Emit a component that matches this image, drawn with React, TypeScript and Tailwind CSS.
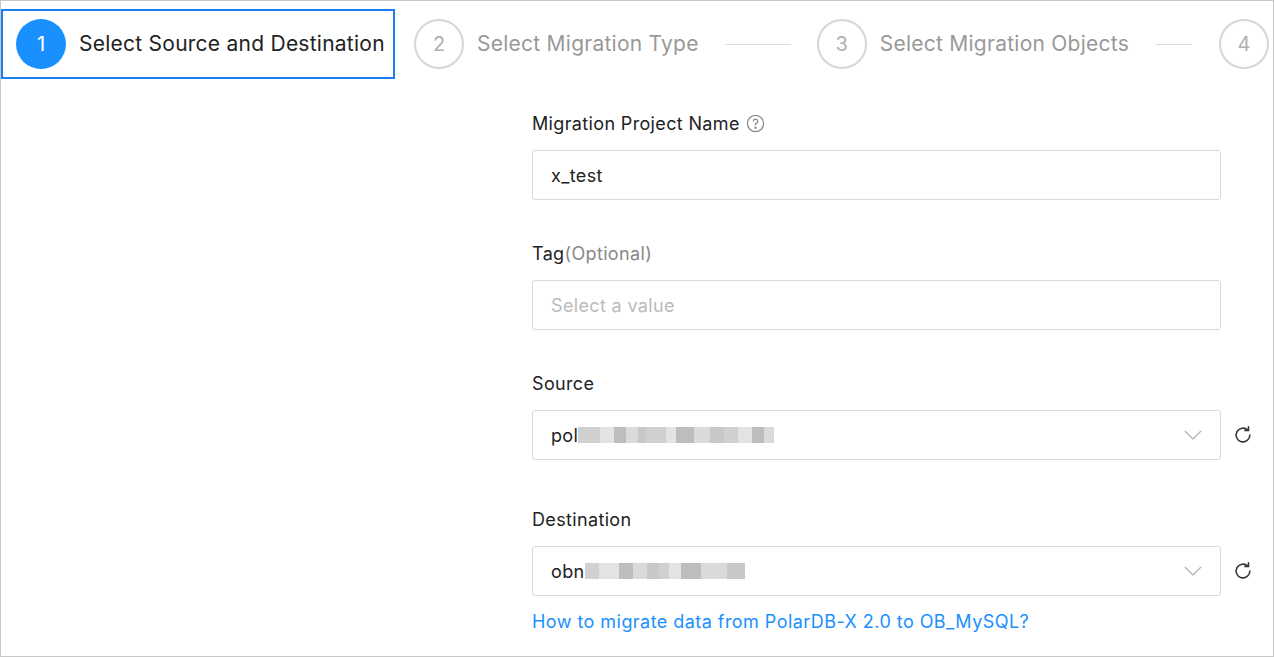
import React from "react";

const F = { fontFamily: "Inter, 'Liberation Sans', sans-serif" };

function Refresh() {
  return (
    <svg width="22" height="22" viewBox="0 0 24 24" fill="none" stroke="#333" strokeWidth="1.7" strokeLinecap="round">
      <path d="M19.5 12a7.5 7.5 0 1 1-2.3-5.4" />
      <path d="M18 3v4h-4" />
    </svg>
  );
}
function Chevron() {
  return (
    <svg width="18" height="12" viewBox="0 0 18 12" fill="none" stroke="#b5b5b5" strokeWidth="1.4">
      <path d="M1 2l8 8 8-8" />
    </svg>
  );
}
function Blur({ widths }: { widths: number[] }) {
  const shades = ["#d0d0d0", "#e3e3e3", "#bdbdbd", "#dadada", "#c8c8c8"];
  return (
    <div className="flex items-center h-[18px]">
      {widths.map((w, i) => (
        <div key={i} style={{ width: w, background: shades[i % shades.length] }} className="h-[16px]" />
      ))}
    </div>
  );
}

function Step({ n, label, active }: { n: number; label: string; active?: boolean }) {
  return (
    <div className="flex items-center gap-[13px] shrink-0">
      <div
        className={
          active
            ? "w-[50px] h-[50px] rounded-full bg-[#1a90ff] text-white flex items-center justify-center text-[20px]"
            : "w-[50px] h-[50px] rounded-full border-2 border-[#d6d6d6] text-[#b0b0b0] flex items-center justify-center text-[20px]"
        }
      >
        {n}
      </div>
      {label && <span className={active ? "text-[21px] tracking-[0.25px] text-[#222]" : "text-[21px] tracking-[0.25px] text-[#999]"}>{label}</span>}
    </div>
  );
}

function SelectBox({ prefix, widths }: { prefix: string; widths: number[] }) {
  return (
    <div className="flex items-center gap-[11px]">
      <div className="w-[689px] h-[50px] border border-[#d9d9d9] rounded-[3px] flex items-center px-[18px] justify-between">
        <div className="flex items-center text-[18px] text-[#222]">
          {prefix}
          <Blur widths={widths} />
        </div>
        <Chevron />
      </div>
      <Refresh />
    </div>
  );
}

export default function App() {
  return (
    <div style={F} className="w-[1274px] h-[657px] border border-[#c8c8c8] bg-white overflow-hidden">
      <div className="flex items-center mt-[8px] h-[70px]">
        <div className="h-[70px] w-[394px] border-2 border-[#1a7ff0] flex items-center pl-[13px]">
          <Step n={1} label="Select Source and Destination" active />
        </div>
        <div className="ml-[19px] flex items-center">
          <Step n={2} label="Select Migration Type" />
          <div className="w-[66px] h-px bg-[#ddd] mx-[26px]" />
          <Step n={3} label="Select Migration Objects" />
          <div className="w-[36px] h-px bg-[#ddd] mx-[27px]" />
          <Step n={4} label="" />
        </div>
      </div>
      <div className="ml-[531px] mt-[31px] flex flex-col text-[18px] tracking-[0.35px] text-[#222]">
        <div className="flex items-center gap-[6px] h-[26px]">
          Migration Project Name
          <svg width="19" height="19" viewBox="0 0 20 20" fill="none" stroke="#888" strokeWidth="1.3">
            <circle cx="10" cy="10" r="8.5" />
            <path d="M7.7 7.8a2.3 2.3 0 1 1 3.2 2.1c-.6.3-.9.7-.9 1.4v.6" />
            <circle cx="10" cy="14.4" r=".6" fill="#888" />
          </svg>
        </div>
        <div className="mt-[14px] w-[689px] h-[50px] border border-[#d9d9d9] rounded-[3px] flex items-center px-[18px]">x_test</div>
        <div className="mt-[40px] h-[26px] flex items-center">
          Tag<span className="text-[#888]">(Optional)</span>
        </div>
        <div className="mt-[14px] w-[689px] h-[50px] border border-[#d9d9d9] rounded-[3px] flex items-center px-[18px] text-[#bbb]">Select a value</div>
        <div className="mt-[40px] h-[26px] flex items-center">Source</div>
        <div className="mt-[14px]">
          <SelectBox prefix="pol" widths={[22, 14, 12, 12, 8, 20, 10, 18, 16, 14, 14, 14, 12, 10]} />
        </div>
        <div className="mt-[46px] h-[26px] flex items-center">Destination</div>
        <div className="mt-[14px]">
          <SelectBox prefix="obn" widths={[14, 20, 14, 14, 12, 10, 12, 20, 26, 18]} />
        </div>
        <div className="mt-[12px] text-[#1a90ff] text-[18px] tracking-[0.45px]">How to migrate data from PolarDB-X 2.0 to OB_MySQL?</div>
      </div>
    </div>
  );
}
